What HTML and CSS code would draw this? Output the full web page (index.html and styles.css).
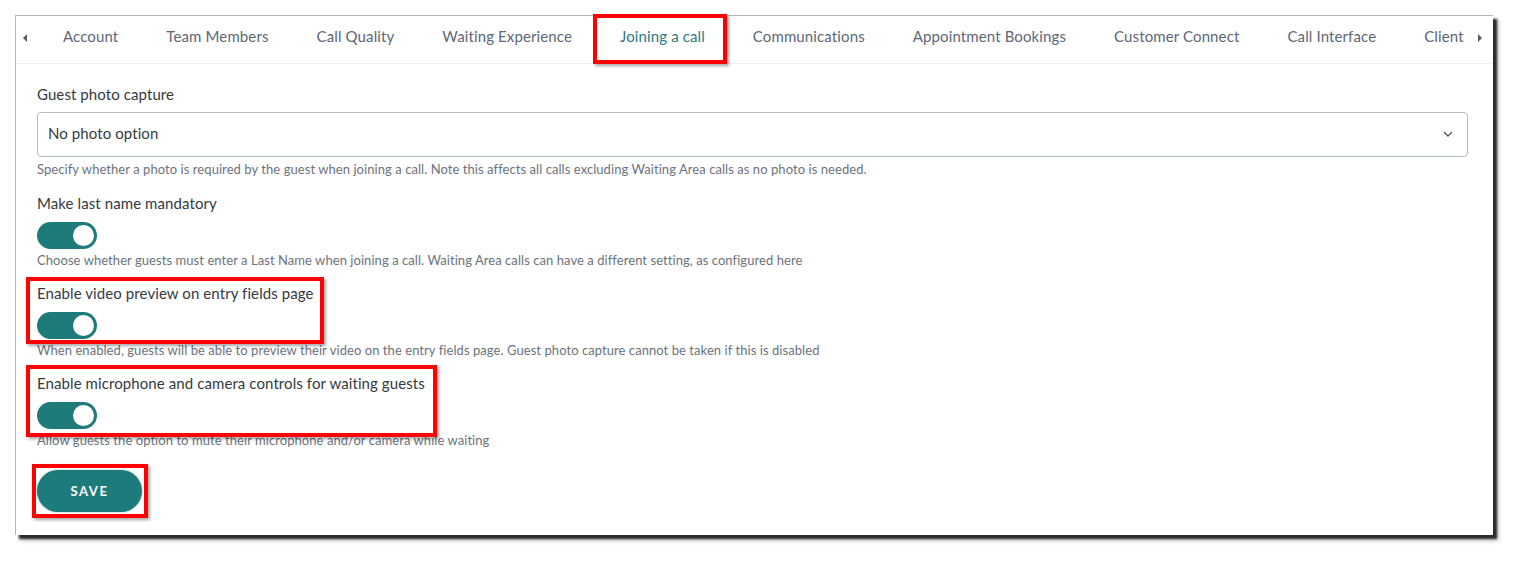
FILE: index.html
```html
<!DOCTYPE html>
<html lang="en">
<head>
<meta charset="utf-8">
<title>Joining a call</title>
<link rel="stylesheet" href="styles.css">
</head>
<body>
<div class="frame">
  <nav class="tabs">
    <div class="arrow arrow-left"><span class="tri tri-left"></span></div>
    <div class="tab-list">
      <div class="tab">Account</div>
      <div class="tab">Team Members</div>
      <div class="tab">Call Quality</div>
      <div class="tab">Waiting Experience</div>
      <div class="tab active">Joining a call</div>
      <div class="tab">Communications</div>
      <div class="tab">Appointment Bookings</div>
      <div class="tab">Customer Connect</div>
      <div class="tab">Call Interface</div>
      <div class="tab">Client Portal</div>
    </div>
    <div class="arrow arrow-right"><span class="tri tri-right"></span></div>
  </nav>

  <main class="content">
    <section class="field field-select">
      <label class="label">Guest photo capture</label>
      <div class="select">
        <span>No photo option</span>
        <svg class="chev" width="10" height="6" viewBox="0 0 10 6"><path d="M1 1 L5 5 L9 1" fill="none" stroke="#555" stroke-width="1.3"/></svg>
      </div>
      <p class="help">Specify whether a photo is required by the guest when joining a call. Note this affects all calls excluding Waiting Area calls as no photo is needed.</p>
    </section>

    <section class="field">
      <label class="label">Make last name mandatory</label>
      <div class="toggle"><span class="knob"></span></div>
      <p class="help">Choose whether guests must enter a Last Name when joining a call. Waiting Area calls can have a different setting, as configured here</p>
    </section>

    <section class="field">
      <label class="label">Enable video preview on entry fields page</label>
      <div class="toggle"><span class="knob"></span></div>
      <p class="help">When enabled, guests will be able to preview their video on the entry fields page. Guest photo capture cannot be taken if this is disabled</p>
    </section>

    <section class="field">
      <label class="label">Enable microphone and camera controls for waiting guests</label>
      <div class="toggle"><span class="knob"></span></div>
      <p class="help">Allow guests the option to mute their microphone and/or camera while waiting</p>
    </section>

    <button class="save">SAVE</button>
  </main>

  <div class="mark mark-tab"></div>
  <div class="mark mark-video"></div>
  <div class="mark mark-mic"></div>
  <div class="mark mark-save"></div>
</div>
</body>
</html>
```

FILE: styles.css
```css
* { box-sizing: border-box; }

html, body { height: 100%; }

body {
  margin: 0;
  background: #ffffff;
  font-family: Lato, "Open Sans", Arial, sans-serif;
  color: #343a40;
}

.frame {
  position: relative;
  margin: 15px 0 0 15px;
  width: 1478px;
  height: 520px;
  background: #ffffff;
  border-left: 1px solid #b5b5b5;
  border-top: 1px solid #b5b5b5;
  box-shadow: 4px 4px 2px #2a2a2a, 5px 5px 5px rgba(0, 0, 0, 0.3);
}

.tabs {
  display: flex;
  align-items: stretch;
  height: 48px;
  border-bottom: 1px solid #eef0f2;
}

.arrow {
  display: flex;
  align-items: center;
  justify-content: center;
  flex: none;
  padding-bottom: 4px;
}

.arrow-left { width: 23px; justify-content: flex-start; padding-left: 7px; }
.arrow-right { width: 27px; }

.tri {
  width: 0;
  height: 0;
  border-top: 4px solid transparent;
  border-bottom: 4px solid transparent;
}
.tri-left { border-right: 4px solid #555b62; }
.tri-right { border-left: 4px solid #555b62; }

.tab-list {
  flex: 1;
  display: flex;
  overflow: hidden;
}

.tab {
  flex: none;
  padding: 0 24px;
  line-height: 41px;
  font-size: 15px;
  letter-spacing: 0.12px;
  color: #5d6774;
  white-space: nowrap;
}

.tab.active { color: #2b7c84; }

.content {
  padding: 21px 25px 0 21px;
}

.field { margin-bottom: 15px; }
.field-select { margin-bottom: 16px; }

.label {
  display: block;
  font-size: 15px;
  line-height: 18px;
  letter-spacing: 0.09px;
  color: #343a40;
  margin-bottom: 10px;
}

.field-select .label { margin-bottom: 9px; }

.select {
  display: flex;
  align-items: center;
  justify-content: space-between;
  height: 45px;
  padding: 0 14px 3px 10px;
  border: 1px solid #b3bcc5;
  border-radius: 4px;
  font-size: 15px;
  letter-spacing: 0.09px;
  color: #343a40;
}

.chev { display: block; margin-top: 2px; }

.help {
  margin: 2px 0 0;
  font-size: 13px;
  line-height: 18px;
  letter-spacing: 0.06px;
  color: #6c737b;
}

.field-select .help { margin-top: 3px; }

.toggle {
  position: relative;
  width: 60px;
  height: 27px;
  border-radius: 14px;
  background: #1f7b7a;
}

.knob {
  position: absolute;
  right: 3px;
  top: 3px;
  width: 21px;
  height: 21px;
  border-radius: 50%;
  background: #ffffff;
}

.save {
  display: block;
  margin-top: 21px;
  width: 105px;
  height: 42px;
  border: none;
  border-radius: 21px;
  background: #1e7b7b;
  color: #ffffff;
  font-family: Lato, "Open Sans", Arial, sans-serif;
  font-weight: 700;
  font-size: 13px;
  letter-spacing: 1.6px;
  box-shadow: 0 0 2px rgba(30, 123, 123, 0.6);
}

.mark {
  position: absolute;
  border: 4px solid #ff0000;
  box-shadow: 2px 2px 3px rgba(0, 0, 0, 0.35);
  pointer-events: none;
}

.mark-tab { left: 577px; top: -2px; width: 134px; height: 50px; }
.mark-video { left: 10px; top: 261px; width: 298px; height: 67px; }
.mark-mic { left: 10px; top: 349px; width: 411px; height: 72px; }
.mark-save { left: 16px; top: 448px; width: 116px; height: 54px; }
```
